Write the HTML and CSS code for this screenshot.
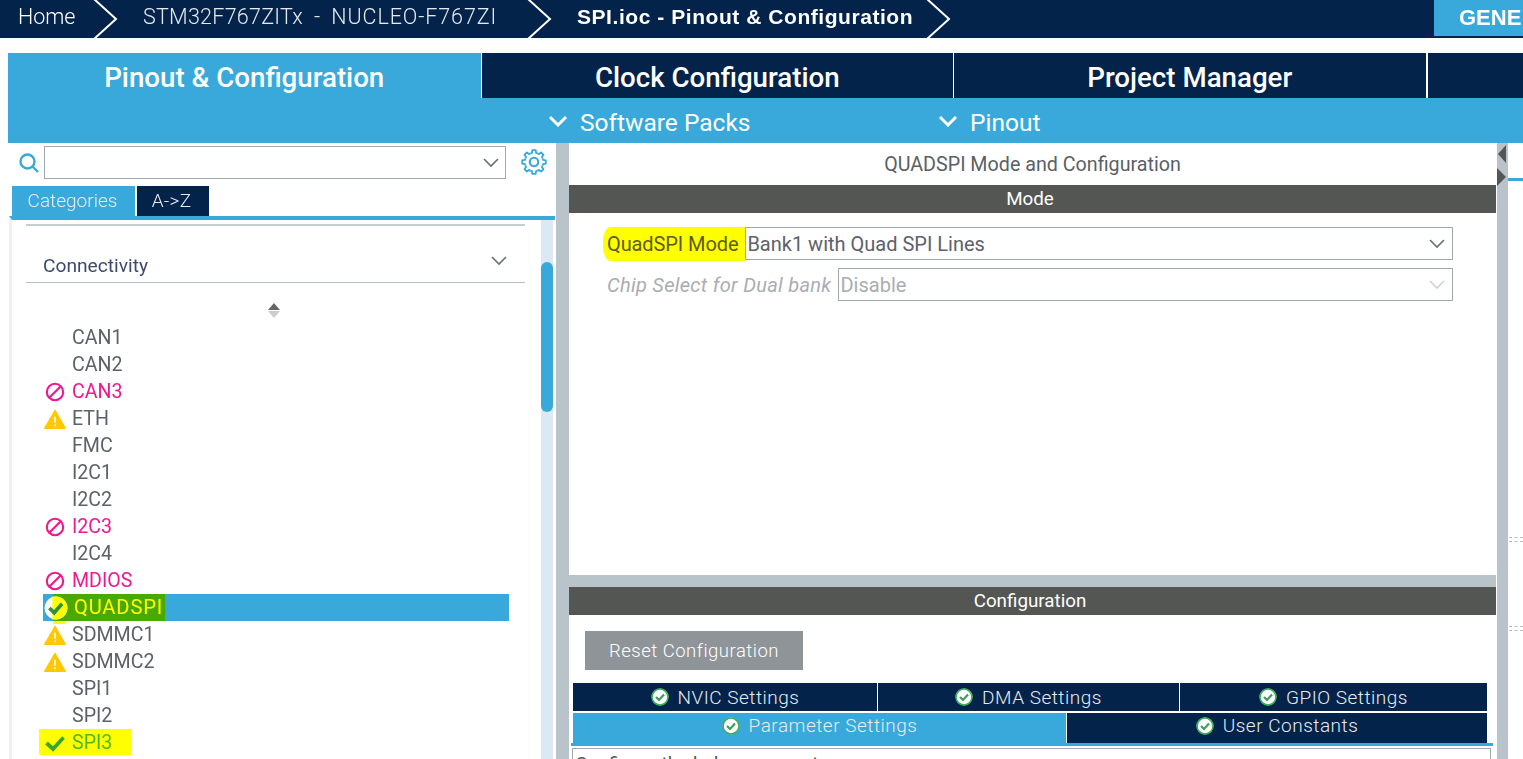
FILE: index.html
```html
<!DOCTYPE html>
<html lang="en">
<head>
<meta charset="utf-8">
<title>STM32CubeMX SPI.ioc</title>
<link rel="stylesheet" href="styles.css">
</head>
<body>
<svg class="defs" width="0" height="0" aria-hidden="true">
  <symbol id="crumb" viewBox="0 0 26 38"><path d="M2 -1 L24 19 L2 39" fill="none" stroke="#fff" stroke-width="2"/></symbol>
  <symbol id="chev" viewBox="0 0 16 10"><path d="M1 1 L8 8 L15 1" fill="none" stroke="currentColor" stroke-width="1.6"/></symbol>
  <symbol id="chevbold" viewBox="0 0 20 12"><path d="M2 2 L10 10 L18 2" fill="none" stroke="#fff" stroke-width="3"/></symbol>
  <symbol id="ban" viewBox="0 0 20 20"><circle cx="10" cy="10" r="8.2" fill="none" stroke="#ec1a8e" stroke-width="2.1"/><path d="M4.5 15.5 L15.5 4.5" stroke="#ec1a8e" stroke-width="2.1"/></symbol>
  <symbol id="warn" viewBox="0 0 20 20"><path d="M10 2 L19.5 18.5 L.5 18.5 Z" fill="#ffc800" stroke="#ffc800" stroke-linejoin="round"/><path d="M10 8 V13.5 M10 15 V16.5" stroke="#fff" stroke-width="1.4"/></symbol>
  <symbol id="tick" viewBox="0 0 20 20"><path d="M1.5 10 L8 16 L18.5 4.5" fill="none" stroke="#38a628" stroke-width="3.8"/></symbol>
  <symbol id="okdot" viewBox="0 0 18 18"><circle cx="9" cy="9" r="8.4" fill="#fff"/><circle cx="9" cy="9" r="8" fill="none" stroke="#3aaa5c" stroke-width="1.6"/><path d="M5 9 L8 12 L13 6.5" fill="none" stroke="#3aa05a" stroke-width="2.2"/></symbol>
  <path id="tooth" d="M-3.29 -7.95 L-1.93 -8.38 L-1.53 -10.89 L1.53 -10.89 L1.93 -8.38 L3.29 -7.95" fill="none" stroke="#39a9dc" stroke-width="1.7" stroke-linejoin="round"/>
</svg>

<header class="crumbs">
  <span class="crumb crumb-home">Home</span>
  <svg class="crumb-sep"><use href="#crumb"/></svg>
  <span class="crumb crumb-mcu">STM32F767ZITx&nbsp; -&nbsp; <span class="crumb-board">NUCLEO-F767ZI</span></span>
  <svg class="crumb-sep"><use href="#crumb"/></svg>
  <span class="crumb crumb-file">SPI.ioc - Pinout &amp; Configuration</span>
  <svg class="crumb-sep"><use href="#crumb"/></svg>
  <button class="generate">GENE</button>
</header>

<div class="app">
  <nav class="maintabs">
    <div class="maintab active">Pinout &amp; Configuration</div>
    <div class="maintab">Clock Configuration</div>
    <div class="maintab">Project Manager</div>
    <div class="maintab last"></div>
  </nav>
  <div class="subbar">
    <div class="subitem sub-packs"><svg class="subchev"><use href="#chevbold"/></svg>Software Packs</div>
    <div class="subitem sub-pinout"><svg class="subchev"><use href="#chevbold"/></svg>Pinout</div>
  </div>

  <main class="workspace">
    <aside class="left">
      <div class="search">
        <svg class="search-icon" viewBox="0 0 22 22"><circle cx="9.5" cy="9.5" r="7" fill="none" stroke="#39a9dc" stroke-width="2.4"/><path d="M14.5 14.5 L20 20" stroke="#39a9dc" stroke-width="2.4"/></svg>
        <div class="search-box"><svg class="box-chev"><use href="#chev"/></svg></div>
        <svg class="gear" viewBox="-12 -12 24 24">
          <use href="#tooth"/>
          <use href="#tooth" transform="rotate(45)"/>
          <use href="#tooth" transform="rotate(90)"/>
          <use href="#tooth" transform="rotate(135)"/>
          <use href="#tooth" transform="rotate(180)"/>
          <use href="#tooth" transform="rotate(225)"/>
          <use href="#tooth" transform="rotate(270)"/>
          <use href="#tooth" transform="rotate(315)"/>
          <circle r="3.9" fill="none" stroke="#39a9dc" stroke-width="2"/>
        </svg>
      </div>
      <div class="cat-tabs">
        <div class="cat-tab active">Categories</div>
        <div class="cat-tab">A-&gt;Z</div>
      </div>
      <div class="cat-body">
        <div class="cat-list">
          <div class="rule"></div>
          <div class="group"><span>Connectivity</span><svg class="group-chev"><use href="#chev"/></svg></div>
          <div class="sorter"><span class="sort-up"></span><span class="sort-down"></span></div>
          <ul class="items">
            <li class="item"><span class="ic"></span>CAN1</li>
            <li class="item"><span class="ic"></span>CAN2</li>
            <li class="item off"><svg class="ic"><use href="#ban"/></svg>CAN3</li>
            <li class="item"><svg class="ic ic-warn"><use href="#warn"/></svg>ETH</li>
            <li class="item"><span class="ic"></span>FMC</li>
            <li class="item"><span class="ic"></span>I2C1</li>
            <li class="item"><span class="ic"></span>I2C2</li>
            <li class="item off"><svg class="ic"><use href="#ban"/></svg>I2C3</li>
            <li class="item"><span class="ic"></span>I2C4</li>
            <li class="item off"><svg class="ic"><use href="#ban"/></svg>MDIOS</li>
            <li class="item selected">
              <span class="sel-mark"></span>
              <svg class="ic sel-ic" viewBox="0 0 20 20"><circle cx="10" cy="10" r="9.5" fill="#fff"/><path d="M10 .5a9.5 9.5 0 0 1 0 19h-3v-19z" fill="#ffff00"/><path d="M4.5 10 L8.5 14 L15 6.5" fill="none" stroke="#2f8f3a" stroke-width="3"/></svg>
              <span class="sel-text">QUADSPI</span>
            </li>
            <li class="item"><svg class="ic ic-warn"><use href="#warn"/></svg>SDMMC1</li>
            <li class="item"><svg class="ic ic-warn"><use href="#warn"/></svg>SDMMC2</li>
            <li class="item"><span class="ic"></span>SPI1</li>
            <li class="item"><span class="ic"></span>SPI2</li>
            <li class="item done"><svg class="ic"><use href="#tick"/></svg>SPI3</li>
          </ul>
        </div>
        <div class="scrolltrack"><div class="scrollthumb"></div></div>
      </div>
    </aside>

    <div class="splitter"></div>

    <section class="center">
      <div class="mode-pane">
        <div class="pane-title">QUADSPI Mode and Configuration</div>
        <div class="pane-head">Mode</div>
        <div class="form">
          <div class="field">
            <label class="mark">QuadSPI Mode</label>
            <div class="select">Bank1 with Quad SPI Lines<svg class="sel-chev"><use href="#chev"/></svg></div>
          </div>
          <div class="field disabled">
            <label>Chip Select for Dual bank</label>
            <div class="select">Disable<svg class="sel-chev"><use href="#chev"/></svg></div>
          </div>
        </div>
      </div>
      <div class="config-pane">
        <div class="pane-head">Configuration</div>
        <button class="reset">Reset Configuration</button>
        <div class="cfg-tabs row3">
          <div class="cfg-tab nvic"><svg class="ok"><use href="#okdot"/></svg>NVIC Settings</div>
          <div class="cfg-tab dma"><svg class="ok"><use href="#okdot"/></svg>DMA Settings</div>
          <div class="cfg-tab gpio"><svg class="ok"><use href="#okdot"/></svg>GPIO Settings</div>
        </div>
        <div class="cfg-tabs row2">
          <div class="cfg-tab active"><svg class="ok"><use href="#okdot"/></svg>Parameter Settings</div>
          <div class="cfg-tab"><svg class="ok"><use href="#okdot"/></svg>User Constants</div>
        </div>
        <div class="cfg-line"></div>
        <div class="cfg-box">Configure the below parameters :</div>
      </div>
    </section>

    <div class="splitter narrow">
      <span class="arrow arrow-left"></span>
      <span class="arrow arrow-right"></span>
    </div>

    <section class="chip">
      <div class="chip-line"></div>
      <div class="chip-mark mark-a"></div>
      <div class="chip-mark mark-b"></div>
    </section>
  </main>
</div>
</body>
</html>
```
FILE: styles.css
```css
* { box-sizing: border-box; }
html, body { margin: 0; height: 759px; overflow: hidden; background: #fff; }
body { font-family: Roboto, "Liberation Sans", sans-serif; color: #5a5f66; }
.defs { position: absolute; }
ul { list-style: none; margin: 0; padding: 0; }

.crumbs { height: 38px; background: #03234b; display: flex; align-items: center; color: #fff; overflow: hidden; white-space: nowrap; filter: blur(.3px); }
.crumb { font-size: 21.5px; line-height: 30px; height: 34px; }
.crumb-home { margin-left: 18px; width: 74px; font-weight: 300; }
.crumb-mcu { width: 383px; margin-left: 25px; font-weight: 300; letter-spacing: .25px; color: #e6eaef; }
.crumb-board { letter-spacing: .9px; }
.crumb-file { width: 348px; margin-left: 25px; font: bold 21px/30px "Liberation Sans", sans-serif; letter-spacing: .55px; }
.crumb-sep { width: 26px; height: 38px; flex: none; }
.generate { margin-left: auto; width: 89px; height: 36px; align-self: flex-start; background: #39a9dc; color: #fff; border: 0; padding: 0 0 0 25px; font: bold 22px "Liberation Sans", sans-serif; text-align: left; white-space: nowrap; overflow: hidden; }

.app { margin: 15px 0 0 8px; filter: blur(.3px); }
.maintabs { display: flex; height: 45px; }
.maintab { width: 472.5px; background: #03234b; color: #fff; font-size: 27.7px; font-weight: 500; line-height: 50px; text-align: center; border-left: 1px solid #fff; }
.maintab.active { background: #39a9dc; border-left: 0; }
.maintab.last { flex: 1; border-left-width: 2px; overflow: hidden; }
.subbar { height: 45px; background: #39a9dc; color: #fff; font-size: 24.5px; position: relative; display: flex; }
.subitem { display: flex; align-items: center; height: 45px; padding-top: 4px; }
.sub-packs { margin-left: 540px; width: 390px; }
.subchev { width: 20px; height: 12px; margin-right: 12px; margin-top: -4px; }

.workspace { display: flex; height: 616px; }
.left { width: 548px; flex: none; }
.search { height: 38px; display: flex; align-items: flex-start; padding: 3px 0 0 10px; }
.search-icon { width: 22px; height: 22px; margin-top: 6px; flex: none; }
.search-box { width: 462px; height: 33px; margin-left: 4px; position: relative; border: 1.5px solid #a3a8ad; }
.box-chev { position: absolute; right: 6px; top: 11px; width: 16px; height: 10px; color: #6b6f74; }
.gear { width: 26px; height: 26px; margin: 3px 0 0 15px; flex: none; }

.cat-tabs { display: flex; height: 35px; padding: 5px 0 0 4px; gap: 2px; }
.cat-tab { width: 72px; height: 30px; background: #03234b; color: #e8ecf0; font-size: 19px; line-height: 30px; text-align: center; font-weight: 300; }
.cat-tab.active { width: 123px; background: #39a9dc; padding-right: 2px; }
.cat-tab:not(.active) { padding-right: 3px; letter-spacing: .3px; }
.cat-body { border-top: 4px solid #39a9dc; margin-left: 1px; margin-right: 1px; height: 543px; display: flex; border-left: 3px solid #eef1f3; overflow: hidden; }
.cat-list { width: 529px; flex: none; padding-left: 14px; }
.rule { height: 2px; width: 499px; margin-top: 4px; background: #c5ced3; }
.group { width: 499px; height: 57px; border-bottom: 1px solid #b9bec2; position: relative; padding: 28px 0 0 17px; font-size: 19.2px; color: #3d4a6e; }
.group-chev { position: absolute; right: 18px; top: 30px; width: 16px; height: 10px; color: #6b6f74; }
.sorter { height: 41px; padding-top: 20px; margin-left: 242px; display: flex; flex-direction: column; gap: 1px; }
.sort-up, .sort-down { width: 0; border-left: 6px solid transparent; border-right: 6px solid transparent; }
.sort-up { border-bottom: 7px solid #666; }
.sort-down { border-top: 7px solid #ccc; }
.items { margin-left: 17px; }
.item { height: 27px; display: flex; align-items: center; font-size: 19.6px; line-height: 27px; color: #5d6168; width: 466px; position: relative; white-space: nowrap; isolation: isolate; }
.ic { width: 20px; height: 20px; margin: 0 7px 0 2px; flex: none; }
.ic-warn { width: 22px; height: 22px; margin: 0 6px 0 1px; }
.off { color: #ec1a8e; }
.done { color: #4fb81c; }
.done::before { content: ""; position: absolute; left: -4px; top: 0; width: 92px; height: 26px; background: #ffff00; z-index: -1; }
.selected { background: #39a9dc; color: #ffff00; }
.sel-mark { position: absolute; left: 10px; top: 0; width: 112px; height: 27px; background: #4aa800; }
.sel-mark::after { content: ""; position: absolute; left: 0; top: 27px; width: 12px; height: 3px; background: #ffff00; }
.sel-ic { position: relative; margin: 0 7px 0 1px; width: 24px; height: 24px; }
.sel-text { position: relative; margin-left: -1px; font-size: 20.2px; letter-spacing: .8px; }
.scrolltrack { width: 12px; background: #dbe9f5; height: 100%; }
.scrollthumb { margin-top: 42px; height: 150px; background: #39a9dc; border-radius: 6px; }

.splitter { width: 13px; flex: none; background: #b9c4ca; }
.splitter.narrow { width: 11px; margin-left: 1px; position: relative; }
.arrow { position: absolute; width: 0; border-top: 9px solid transparent; border-bottom: 9px solid transparent; }
.arrow-left { left: 1px; top: 2px; border-right: 8px solid #555; }
.arrow-right { left: 0; top: 25px; border-left: 9px solid #555; }

.center { width: 927px; flex: none; display: flex; flex-direction: column; background: #b9c4ca; }
.mode-pane { height: 432px; background: #fff; }
.pane-title { height: 42px; line-height: 44px; text-align: center; font-size: 19.7px; color: #5a5f66; }
.pane-head { height: 28px; background: #545654; color: #fff; text-align: center; font-size: 18.8px; line-height: 28px; padding-right: 5px; }
.form { padding: 14px 0 0 38px; display: flex; flex-direction: column; gap: 8px; }
.field { display: flex; height: 33px; align-items: center; font-size: 20px; }
.field label { padding-right: 7px; letter-spacing: .15px; }
.field .mark { background: #ffff00; color: #5c5c1a; height: 34px; line-height: 34px; border-radius: 8px 0 0 8px / 14px; margin-left: -4px; padding: 0 7px 0 4px; letter-spacing: -.1px; }
.select { flex: 1; margin-right: 43px; height: 33px; border: 1.5px solid #a3a8ad; padding-left: 1px; line-height: 32px; position: relative; color: #5d6168; }
.disabled { color: #a9adb2; }
.disabled label { font-style: italic; letter-spacing: .3px; }
.disabled .select { color: #a9adb2; }
.sel-chev { position: absolute; right: 7px; top: 11px; width: 16px; height: 10px; color: #6b6f74; }
.disabled .sel-chev { color: #cfd2d5; }

.config-pane { flex: 1; margin-top: 12px; background: #fff; overflow: hidden; position: relative; }
.reset { display: block; width: 218px; height: 39px; margin: 16px 0 13px 16px; background: #8f9499; border: 0; color: #fff; font: 300 18.5px Roboto, sans-serif; letter-spacing: .5px; }
.cfg-tabs { display: flex; margin: 0 9px 0 4px; }
.row3 { height: 28px; margin-bottom: 2px; }
.row2 { height: 30px; }
.cfg-tab { background: #03234b; color: #e8ecf0; font-size: 19px; font-weight: 300; letter-spacing: .5px; display: flex; align-items: center; justify-content: center; border-left: 1px solid #fff; }
.cfg-tab.nvic { flex: none; width: 304px; border-left: 0; }
.cfg-tab.dma { flex: none; width: 302px; }
.cfg-tab.gpio { flex: 1; }
.row2 .cfg-tab { flex: 1; padding-bottom: 5px; }
.row2 .cfg-tab.active { flex: none; width: 493px; background: #39a9dc; border-left: 0; }
.ok { width: 18px; height: 18px; margin-right: 9px; }
.cfg-line { height: 3px; margin: 0 3px 0 2px; background: #39a9dc; }
.cfg-box { margin: 2px 5px 0 3px; height: 40px; border: 1.5px solid #a3a8ad; padding: 3px 0 0 2px; font-size: 19px; color: #555; white-space: nowrap; }

.chip { flex: 1; position: relative; background: #fff; }
.chip-line { position: absolute; left: 0; right: 0; top: 35px; height: 3px; background: #39a9dc; }
.chip-mark { position: absolute; right: 0; width: 14px; height: 5px; border-top: 1px dashed #bbb; border-bottom: 1px dashed #bbb; }
.mark-a { top: 394px; }
.mark-b { top: 483px; }
```
